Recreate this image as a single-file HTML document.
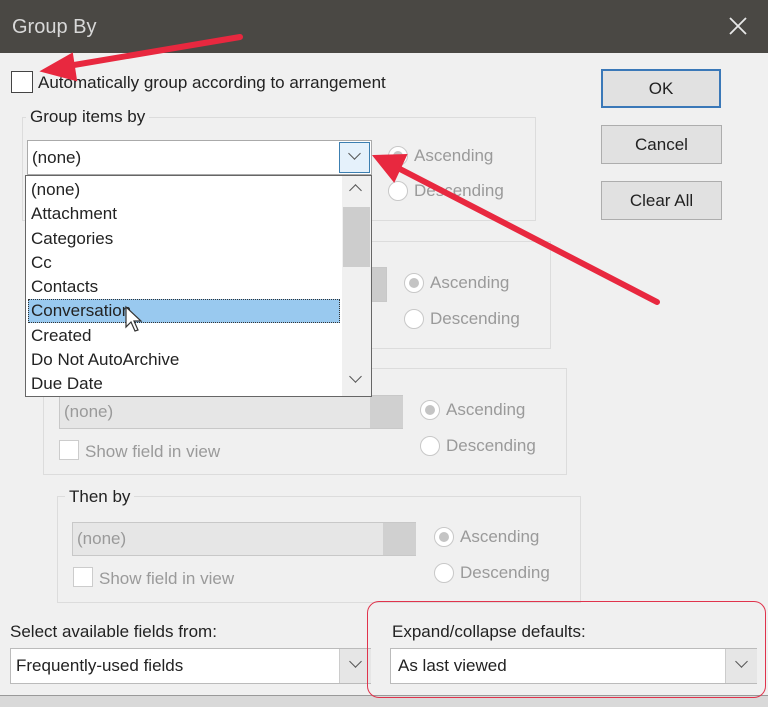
<!DOCTYPE html>
<html><head><meta charset="utf-8"><style>
*{box-sizing:border-box;margin:0;padding:0}
body{width:768px;height:707px;overflow:hidden;background:#d9d9d9;font-family:"Liberation Sans",sans-serif;position:relative;color:#222}
.a{position:absolute}
.t{position:absolute;font-size:17px;white-space:nowrap;line-height:20px}
.g{color:#9a9a9a}
.fs{position:absolute;border:1px solid #dcdcdc}
.btn{position:absolute;background:#e1e1e1;border:1px solid #adadad;font-size:17px;text-align:center}
.rad{position:absolute;width:20px;height:20px;border-radius:50%;border:1px solid #c8c8c8;background:#fff}
.rad.on::after{content:"";position:absolute;left:4px;top:4px;width:10px;height:10px;border-radius:50%;background:#c4c4c4}
.cb{position:absolute;width:20px;height:20px;border:1px solid #ccc;background:#fff}
.combo{position:absolute;background:#e6e6e6;border:1px solid #c8c8c8}
.chev{position:absolute;width:9px;height:9px;border-right:1.5px solid #555;border-bottom:1.5px solid #555;transform:rotate(45deg)}
</style></head><body>
<div class="a" style="left:0;top:0;width:768px;height:696px;background:#f0f0f0;border-bottom:1px solid #999"></div>
<div class="a" style="left:0;top:0;width:768px;height:53px;background:#4a4844"></div>
<div class="t" style="left:12px;top:17px;font-size:20px;color:#d8d8d8">Group By</div>
<svg class="a" style="left:729px;top:17px" width="18" height="18"><path d="M1 1L17 17M17 1L1 17" stroke="#e8e8e8" stroke-width="1.8"/></svg>

<div class="cb" style="left:11px;top:71px;border-color:#444;width:22px;height:22px"></div>
<div class="t" style="left:38px;top:73px">Automatically group according to arrangement</div>

<div class="btn" style="left:601px;top:69px;width:120px;height:39px;border:2px solid #3a78b8;line-height:35px">OK</div>
<div class="btn" style="left:601px;top:125px;width:121px;height:39px;line-height:37px">Cancel</div>
<div class="btn" style="left:601px;top:181px;width:121px;height:39px;line-height:37px">Clear All</div>

<div class="fs" style="left:22px;top:117px;width:514px;height:104px"></div>
<div class="t" style="left:26px;top:107px;background:#f0f0f0;padding:0 4px">Group items by</div>
<div class="rad on" style="left:388px;top:146px"></div><div class="t g" style="left:414px;top:146px">Ascending</div>
<div class="rad" style="left:388px;top:181px"></div><div class="t g" style="left:414px;top:181px">Descending</div>

<div class="fs" style="left:40px;top:241px;width:511px;height:108px"></div>
<div class="combo" style="left:340px;top:267px;width:47px;height:35px;background:#ccc"></div>
<div class="rad on" style="left:404px;top:273px"></div><div class="t g" style="left:430px;top:273px">Ascending</div>
<div class="rad" style="left:404px;top:309px"></div><div class="t g" style="left:430px;top:309px">Descending</div>

<div class="fs" style="left:43px;top:368px;width:524px;height:107px"></div>
<div class="combo" style="left:59px;top:395px;width:344px;height:34px"><div class="a" style="left:310px;top:0;width:33px;height:32px;background:#d0d0d0"></div></div>
<div class="t g" style="left:64px;top:402px">(none)</div>
<div class="rad on" style="left:420px;top:400px"></div><div class="t g" style="left:446px;top:400px">Ascending</div>
<div class="rad" style="left:420px;top:436px"></div><div class="t g" style="left:446px;top:436px">Descending</div>
<div class="cb" style="left:59px;top:440px"></div><div class="t g" style="left:85px;top:442px">Show field in view</div>

<div class="fs" style="left:57px;top:496px;width:524px;height:107px"></div>
<div class="t" style="left:65px;top:487px;background:#f0f0f0;padding:0 4px">Then by</div>
<div class="combo" style="left:72px;top:522px;width:344px;height:34px"><div class="a" style="left:310px;top:0;width:33px;height:32px;background:#d0d0d0"></div></div>
<div class="t g" style="left:77px;top:529px">(none)</div>
<div class="rad on" style="left:434px;top:527px"></div><div class="t g" style="left:460px;top:527px">Ascending</div>
<div class="rad" style="left:434px;top:563px"></div><div class="t g" style="left:460px;top:563px">Descending</div>
<div class="cb" style="left:73px;top:567px"></div><div class="t g" style="left:99px;top:569px">Show field in view</div>

<div class="t" style="left:10px;top:622px">Select available fields from:</div>
<div class="a" style="left:10px;top:648px;width:361px;height:36px;background:#fff;border:1px solid #bbb"><div class="a" style="left:328px;top:0;width:32px;height:34px;background:#e6e6e6;border-left:1px solid #ccc"></div><div class="chev" style="left:340px;top:8px"></div></div>
<div class="t" style="left:16px;top:656px">Frequently-used fields</div>
<div class="t" style="left:392px;top:622px">Expand/collapse defaults:</div>
<div class="a" style="left:390px;top:648px;width:367px;height:36px;background:#fff;border:1px solid #bbb"><div class="a" style="left:334px;top:0;width:32px;height:34px;background:#e6e6e6;border-left:1px solid #ccc"></div><div class="chev" style="left:346px;top:8px"></div></div>
<div class="t" style="left:398px;top:656px">As last viewed</div>
<div class="a" style="left:367px;top:601px;width:399px;height:97px;border:1.5px solid #e0334c;border-radius:12px"></div>

<div class="a" style="left:27px;top:140px;width:345px;height:35px;background:#fff;border:1px solid #aaa"><div class="a" style="left:311px;top:1px;width:31px;height:31px;background:#e5f1fb;border:1px solid #3c7fb1"></div><div class="chev" style="left:322px;top:8px"></div></div>
<div class="t" style="left:32px;top:148px">(none)</div>

<div class="a" style="left:25px;top:175px;width:347px;height:222px;background:#fff;border:1px solid #666"></div>
<div class="a" style="left:342px;top:176px;width:29px;height:220px;background:#f0f0f0"></div>
<div class="a" style="left:343px;top:207px;width:27px;height:60px;background:#cdcdcd"></div>
<div class="chev" style="left:351px;top:186px;transform:rotate(225deg)"></div>
<div class="chev" style="left:351px;top:372px"></div>
<div class="a" style="left:28px;top:299px;width:312px;height:24px;background:#99c9ef;border:1px dotted #333"></div>
<div class="t" style="left:31px;top:180px">(none)</div>
<div class="t" style="left:31px;top:204px">Attachment</div>
<div class="t" style="left:31px;top:229px">Categories</div>
<div class="t" style="left:31px;top:253px">Cc</div>
<div class="t" style="left:31px;top:277px">Contacts</div>
<div class="t" style="left:31px;top:301px">Conversation</div>
<div class="t" style="left:31px;top:326px">Created</div>
<div class="t" style="left:31px;top:350px">Do Not AutoArchive</div>
<div class="t" style="left:31px;top:374px">Due Date</div>
<svg class="a" style="left:124px;top:305px" width="20" height="30"><path d="M2 2 L2 22 L7 17 L11 26 L14 25 L10 16 L17 16 Z" fill="#fff" stroke="#333" stroke-width="1.2"/></svg>

<svg class="a" style="left:0;top:0" width="768" height="707">
<g stroke="#e8283f" stroke-width="6" fill="#e8283f" stroke-linecap="round">
<line x1="240" y1="37" x2="68" y2="66"/>
<polygon points="42,71 72,54 76,80" stroke-width="2"/>
<line x1="657" y1="302" x2="398" y2="168"/>
<polygon points="374,156 406,155 394,181" stroke-width="2"/>
</g></svg>
</body></html>
